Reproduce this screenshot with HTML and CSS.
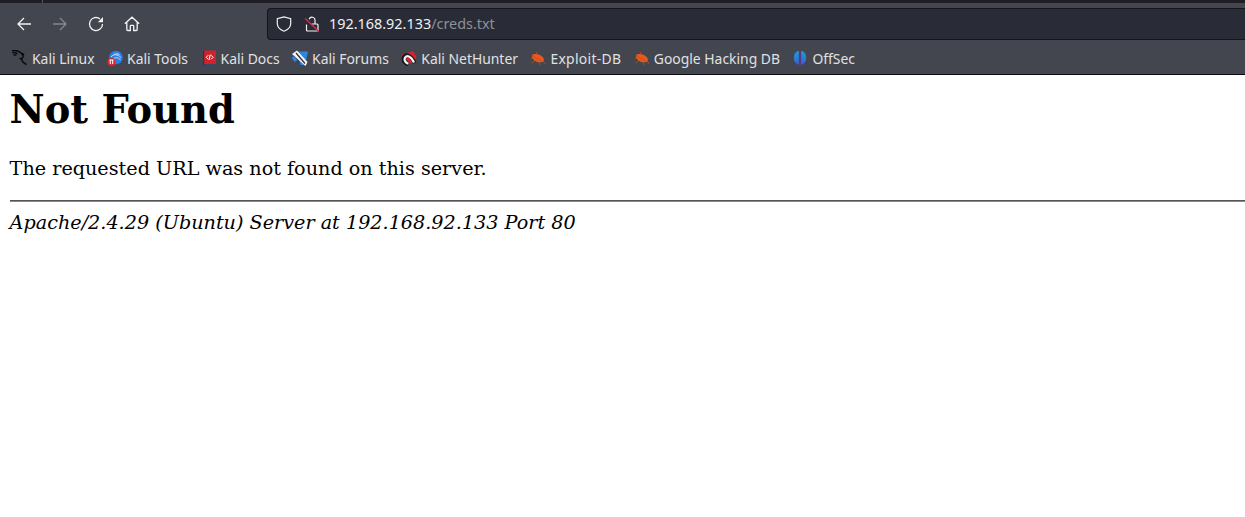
FILE: index.html
```html
<!DOCTYPE html>
<html lang="en">
<head>
<meta charset="utf-8">
<title>404 Not Found</title>
<link rel="stylesheet" href="styles.css">
</head>
<body>
<header class="chrome">
  <div class="tabstrip"><span class="tabmark"></span></div>
  <div class="toolbar">
    <nav class="navbtns">
      <svg class="navicon" viewBox="0 0 16 16"><path d="M15 8H2M8 2 2 8l6 6"/></svg>
      <svg class="navicon dim" viewBox="0 0 16 16"><path d="M1 8h13M8 2l6 6-6 6"/></svg>
      <svg class="navicon" viewBox="0 0 16 16"><path d="M14.500 8A6.500 6.500 0 1 1 12 2.900"/><path class="solid" d="M15 1v5.200H9.800z"/></svg>
      <svg class="navicon" viewBox="0 0 16 16"><path d="M.8 7.800 8 1.200l7.200 6.600M2.800 6.200v7.300c0 .6.400 1 1 1h2.500V10c0-.4.300-.7.700-.7h2c.4 0 .7.300.7.700v4.500h2.500c.6 0 1-.4 1-1V6.200"/></svg>
    </nav>
    <div class="urlbar">
      <svg class="shield" viewBox="0 0 16 16"><path d="M8 .9 1.300 2.600v5C1.300 11.500 4.500 14 8 15.200c3.500-1.200 6.700-3.700 6.700-7.600v-5z"/></svg>
      <svg class="lock" viewBox="0 0 16 16"><path d="M5.200 3.200A3 3 0 0 1 11 4.600V8"/><path d="M7.500 8H13c.6 0 1 .4 1 1v5c0 .6-.4 1-1 1H3.500c-.6 0-1-.4-1-1V8.500"/><path class="slash" d="M1.200 2.500l13.600 13"/></svg>
      <span class="host">192.168.92.133</span><span class="path">/creds.txt</span>
    </div>
  </div>
  <div class="bookmarks">
    <a class="bm">
      <svg viewBox="0 0 16 16" class="fav"><path d="M0 .8c2.200-.6 4.500-.4 6.500.6 2.500 1 4 2.600 4.500 4.300.4 1.500-.4 2.800-2.400 3 1.800 1.200 1.600 2.500 2.300 3.300.9 1 2.300 1.600 3.600 2.600M.5 2.800c1.800-.4 3.500 0 5 .9M1.500 4.800l3 .3M8.600 3.600c1.200-.2 2.500.2 3.500 1" fill="none" stroke="#08080a" stroke-width="1.400"/></svg>
      Kali Linux</a>
    <a class="bm">
      <svg viewBox="0 0 16 16" class="fav"><circle cx="9" cy="7.500" r="6.800" fill="#2c7fe3"/><path d="M4 7c2.500-3 6.500-3 10 .5M7 8.500c2-1.500 4.500-1 6.500 1.500M7 4.500c2-1 4-.8 5.500 0" stroke="#d8e8fb" stroke-width=".9" fill="none"/><circle cx="4.500" cy="12" r="4" fill="#e3262e"/><path d="M3.300 10v4M5.700 10v4M2.500 10h4" stroke="#fff" stroke-width="1"/></svg>
      Kali Tools</a>
    <a class="bm">
      <svg viewBox="0 0 16 16" class="fav"><rect x="2" y=".5" width="13" height="13.500" fill="#d0222b"/><rect x="2" y="14" width="13" height="1.800" fill="#39486a"/><rect x="2" y=".5" width="1.200" height="15" fill="#5c2030"/><path d="M7.300 5.200 5.200 7.300l2.100 2.100M10 5.200l2.100 2.100L10 9.400M9.300 4.500 8 10" stroke="#fff" stroke-width="1" fill="none"/></svg>
      Kali Docs</a>
    <a class="bm">
      <svg viewBox="0 0 16 16" class="fav"><path d="M5 1.500h11L13 15H8.500z" fill="#2f86e0"/><path d="M0 4l5-3.500L15.500 12 13.500 16z" fill="#f4f6f9"/><path d="M4 3l9 10.500" stroke="#2a3142" stroke-width="1.300"/><path d="M1 7l3 4" stroke="#2f86e0" stroke-width="3"/></svg>
      Kali Forums</a>
    <a class="bm">
      <svg viewBox="0 0 16 16" class="fav"><path d="M.8 4.500 12.500 1l3.300 6.500L9.500 14z" fill="#d4222e"/><path d="M13.500 13C10.500 5.500 5 3.500 3 7.500c-1.500 3.500 1.500 6 4.500 7" stroke="#16161a" stroke-width="4" fill="none"/><path d="M13 12.500C10 6 5.500 4.500 3.800 8c-1.100 2.800 1.200 4.800 3.600 5.700" stroke="#f4f4f4" stroke-width="2.200" fill="none"/></svg>
      Kali NetHunter</a>
    <a class="bm">
      <svg viewBox="0 0 16 16" class="fav"><use href="#bug"/></svg>
      <span class="wide">Exploit-DB</span></a>
    <a class="bm">
      <svg viewBox="0 0 16 16" class="fav"><symbol id="bug" viewBox="0 0 16 16"><path d="M.8 8.500 4 7M2 4l3 2M6 1.500 7.500 5M1.500 13 5 10.500M9 12.500l1 3M13 11l2.200 3" stroke="#a8502a" stroke-width=".9"/><ellipse cx="8" cy="8.200" rx="6.300" ry="3.700" fill="#e8571b" transform="rotate(22 8 8.200)"/><path d="M3.500 6.500 11 11" stroke="#b8441a" stroke-width=".6"/></symbol><use href="#bug"/></svg>
      Google Hacking DB</a>
    <a class="bm">
      <svg viewBox="0 0 16 16" class="fav"><defs><linearGradient id="osl" x1="0" y1="0" x2="0" y2="1"><stop offset="0" stop-color="#16a3d6"/><stop offset="1" stop-color="#3f5ad8"/></linearGradient></defs><path d="M6.800 .8A7.400 7.400 0 0 0 6.800 14.800z" fill="url(#osl)"/><path d="M9.200 .8A7.400 7.400 0 0 1 9.200 14.800z" fill="url(#osl)"/><path d="M8 1v15" stroke="#6a2bb8" stroke-width="1"/></svg>
      OffSec</a>
  </div>
</header>
<main class="page">
  <h1>Not Found</h1>
  <p>The requested URL was not found on this server.</p>
  <hr>
  <address>Apache/2.4.29 (Ubuntu) Server at 192.168.92.133 Port 80</address>
</main>
</body>
</html>
```
FILE: styles.css
```css
html, body { margin: 0; padding: 0; background: #fff; overflow: hidden; }
.chrome { background: #43464e; border-bottom: 1px solid #0c0c0f; font-family: "Noto Sans", sans-serif; }
.tabstrip { height: 3px; background: #1e1e24; }
.tabmark { display: block; width: 1px; height: 3px; margin-left: 42px; background: #55565c; }
.toolbar { height: 37px; display: flex; align-items: flex-start; }
.navbtns { display: flex; gap: 20px; padding: 13px 0 0 16px; width: 267px; box-sizing: border-box; flex: none; }
.navicon { width: 16px; height: 16px; fill: none; stroke: #f2f2f4; stroke-width: 1.300; }
.navicon.dim { stroke: #85878c; }
.navicon .solid { fill: #f2f2f4; stroke: none; }
.urlbar { flex: 1; height: 29px; margin-top: 5px; background: #292c37; border: 1px solid #15161b; border-right: 0; border-radius: 4px 0 0 4px; display: flex; align-items: center; padding: 0 0 1px 8px; box-sizing: content-box; font-size: 14.400px; line-height: 20px; }
.shield, .lock { width: 16px; height: 16px; fill: none; stroke: #f2f2f4; stroke-width: 1.200; flex: none; }
.lock { margin-left: 12px; margin-right: 9px; }
.lock .slash { stroke: #e22850; stroke-width: 1.300; }
.host { color: #f0f0f2; }
.path { color: #8f9198; }
.bookmarks { height: 34px; display: flex; align-items: center; padding: 2px 0 0 12px; box-sizing: border-box; gap: 12.500px; }
.bm { display: flex; align-items: center; gap: 4px; color: #e0e1e3; font-size: 13.900px; white-space: nowrap; }
.wide { letter-spacing: .3px; }
.fav { width: 16px; height: 16px; flex: none; }
.page { padding: 11.600px 0 0 9.600px; color: #000; font-family: "DejaVu Serif", serif; font-size: 19.200px; }
h1 { margin: 0 0 25.700px; font-size: 38.400px; font-weight: bold; }
p { margin: 0 0 20.200px; }
hr { margin: 0 0 8.600px; border: 0; border-top: 1px solid #555; border-bottom: 1px solid #8a8a8a; }
address { font-style: italic; }
```
